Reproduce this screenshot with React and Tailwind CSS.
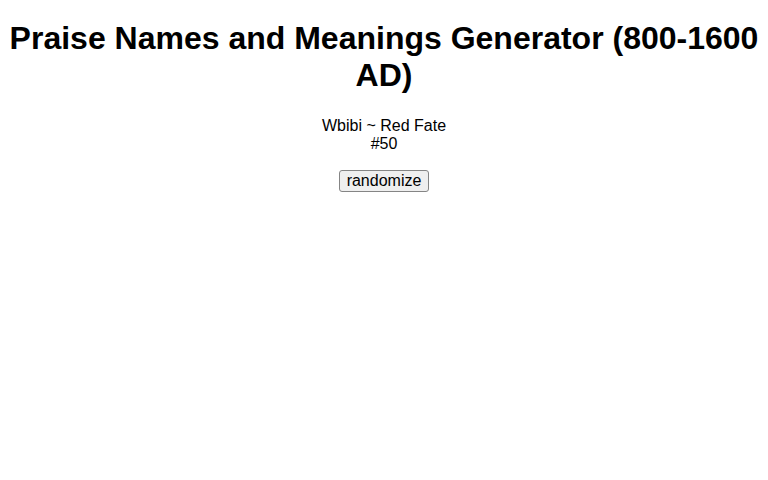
import React, { useState } from 'react';

const names = [
  { name: 'Wbibi', meaning: 'Red Fate', id: 50 },
];

export default function App() {
  const [idx, setIdx] = useState(0);
  const item = names[idx];

  return (
    <div className="bg-white text-black text-center text-base pt-[20px] font-['Liberation_Sans',Arial,sans-serif]">
      <h1 className="text-[32px] font-bold leading-[37px] mb-[22.5px]">
        Praise Names and Meanings Generator (800-1600 AD)
      </h1>
      <div className="leading-[normal]">
        <div>
          {item.name} ~ {item.meaning}
        </div>
        <div>#{item.id}</div>
      </div>
      <div className="mt-4">
        <button
          onClick={() => setIdx((idx + 1) % names.length)}
          className="leading-[normal] px-[7px] py-px bg-[#efefef] border border-[#858585] rounded-[3px] text-base"
        >
          randomize
        </button>
      </div>
    </div>
  );
}
